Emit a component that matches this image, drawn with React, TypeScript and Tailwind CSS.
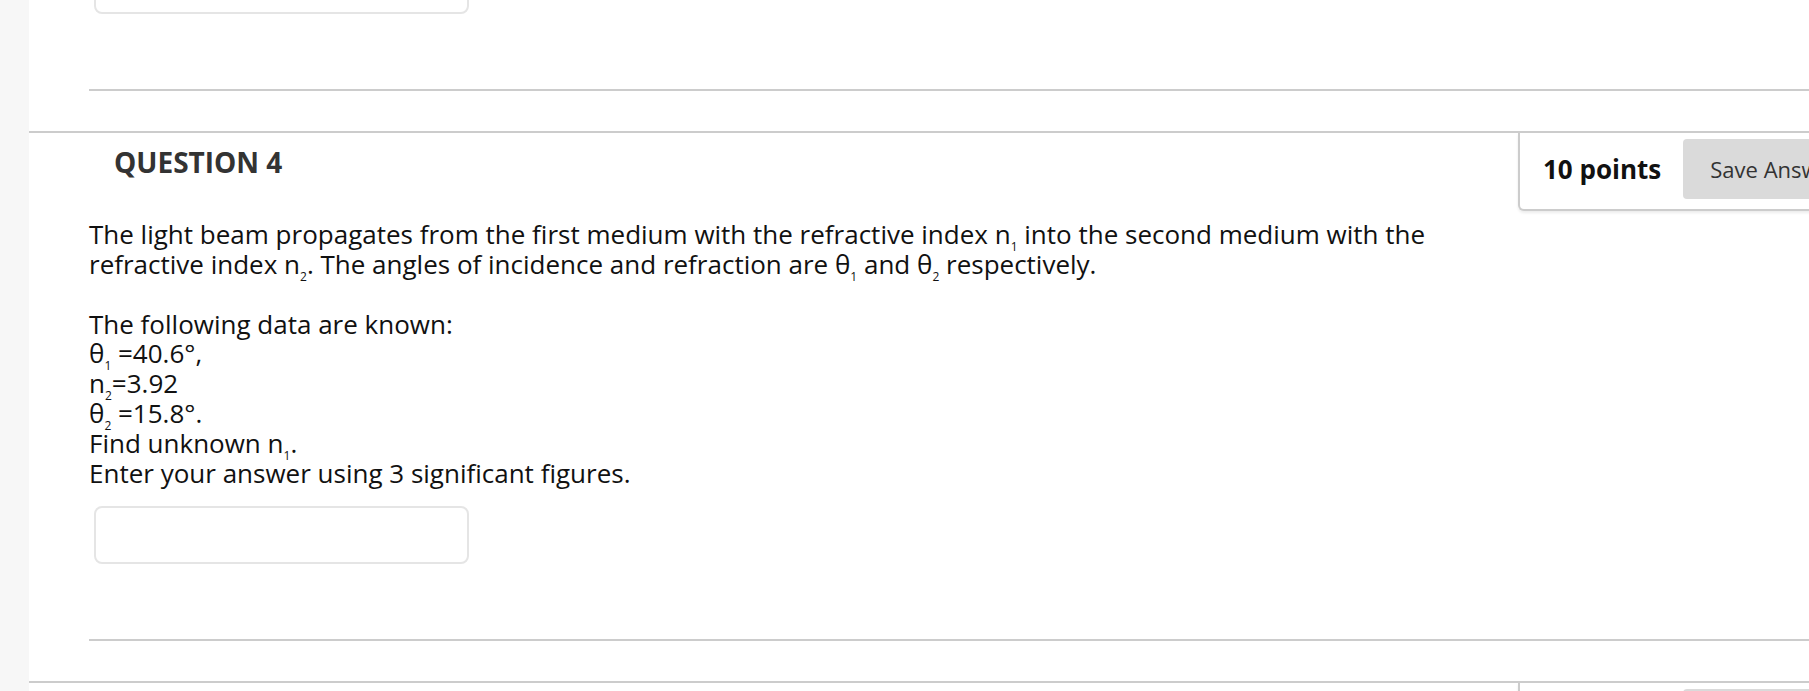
import type { ReactNode } from "react";

function Sub({ children }: { children: ReactNode }) {
  return (
    <sub className="relative top-[7px] align-baseline text-[12px] leading-none">
      {children}
    </sub>
  );
}

function AnswerBox() {
  return (
    <div className="h-[58px] w-[375px] rounded-[8px] border-2 border-[#e5e5e5] bg-white" />
  );
}

function Divider() {
  return <div className="ml-[60px] h-[2px] bg-[#cccccc]" />;
}

function PointsBox() {
  return (
    <div className="-mr-[90px] flex h-[78px] w-[381px] shrink-0 items-start rounded-bl-[6px] border-b-2 border-l-2 border-[#cccccc] bg-white pt-[6px] pl-[23px] shadow-[0_2px_3px_rgba(0,0,0,0.08)]">
      <div className="flex h-[60px] items-center pr-[22px] text-[26px] font-bold whitespace-nowrap text-[#111111]">
        10 points
      </div>
      <div className="flex h-[60px] flex-1 items-center whitespace-nowrap rounded-l-[4px] bg-[#dadada] pl-[27px] text-[22px] text-[#333333]">
        Save Answer
      </div>
    </div>
  );
}

export default function App() {
  return (
    <div
      className="flex h-[691px] w-full overflow-hidden bg-white"
      style={{ fontFamily: '"Open Sans", "Liberation Sans", sans-serif' }}
    >
      <div className="w-[29px] shrink-0 bg-[#f7f7f7]" />

      <div className="min-w-0 flex-1 overflow-hidden">
        {/* tail of question 3 */}
        <div className="-mt-[44px] pl-[65px]">
          <AnswerBox />
        </div>
        <div className="mt-[75px]">
          <Divider />
        </div>

        {/* question 4 */}
        <div className="mt-[40px] border-t-2 border-[#cccccc]">
          <div className="flex items-start justify-between">
            <h2 className="pt-[12px] pl-[85px] text-[28px] leading-[34px] font-bold text-[#333333]">
              QUESTION 4
            </h2>
            <PointsBox />
          </div>

          <div className="mt-[9px] pl-[60px] text-[26px] leading-[29.85px] whitespace-nowrap text-[#111111]">
            <div>
              The light beam propagates from the first medium with the refractive index n<Sub>1</Sub> into the
              second medium with the
            </div>
            <div>
              refractive index n<Sub>2</Sub>. The angles of incidence and refraction are θ<Sub>1</Sub> and θ
              <Sub>2</Sub> respectively.
            </div>
            <div>&nbsp;</div>
            <div>The following data are known:</div>
            <div>
              θ<Sub>1</Sub> =40.6°,
            </div>
            <div>
              n<Sub>2</Sub>=3.92
            </div>
            <div>
              θ<Sub>2</Sub> =15.8°.
            </div>
            <div>
              Find unknown n<Sub>1</Sub>.
            </div>
            <div>Enter your answer using 3 significant figures.</div>
          </div>

          <div className="mt-[17px] pl-[65px]">
            <AnswerBox />
          </div>
          <div className="mt-[75px]">
            <Divider />
          </div>
        </div>

        {/* head of question 5 */}
        <div className="mt-[40px] border-t-2 border-[#cccccc]">
          <div className="flex justify-end">
            <PointsBox />
          </div>
        </div>
      </div>
    </div>
  );
}
